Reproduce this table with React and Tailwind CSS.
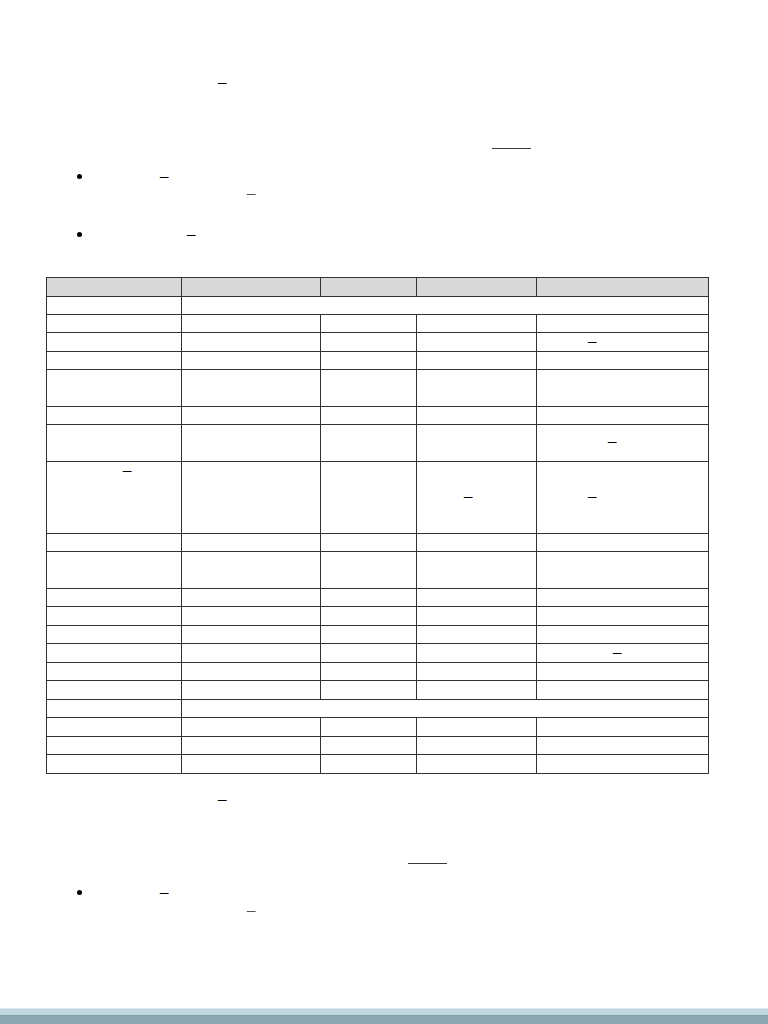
import React from 'react';

// cell in the grid table, borders on right/bottom only (outer frame gives left/top)
function Cell({ className = '', children }) {
  return <div className={`border-r border-b border-[#333333] ${className}`}>{children}</div>;
}

function Blank() {
  return <span className="block leading-[4px] text-[15px] text-black">_</span>;
}

export default function App() {
  return (
    <div className="w-full h-[1024px] bg-white flex flex-col font-['Liberation_Sans',Arial,sans-serif] text-black">
      {/* Top paragraph */}
      <div className="mt-[66px] h-[19px] leading-[19px] text-[15px] pl-[218px]">_</div>
      <div className="mt-[63px] ml-[492px] w-[39px] h-px bg-[#3a3a3a]"></div>

      <div className="mt-[11px] h-[19px] flex text-[15px] leading-[19px]">
        <span className="ml-[77px] mt-[14px] self-start w-[5px] h-[5px] rounded-full bg-black"></span>
        <span className="ml-[78px]">_</span>
      </div>
      <div className="-mt-[2px] h-[19px] leading-[19px] text-[15px] pl-[247px] text-[#555555]">_</div>

      <div className="mt-[22px] h-[19px] flex text-[15px] leading-[19px]">
        <span className="ml-[77px] mt-[14px] self-start w-[5px] h-[5px] rounded-full bg-black"></span>
        <span className="ml-[105px]">_</span>
      </div>

      {/* Table */}
      <div className="mt-[40px] ml-[46px] w-[663px] grid grid-cols-[135px_139px_96px_120px_172px] grid-rows-[19px_18px_18px_19px_18px_37px_18px_37px_72px_18px_37px_18px_19px_18px_19px_18px_19px_18px_19px_18px_19px] border-l border-t border-[#333333]">
        {/* header */}
        <Cell className="bg-[#d9d9d9]" />
        <Cell className="bg-[#d9d9d9]" />
        <Cell className="bg-[#d9d9d9]" />
        <Cell className="bg-[#d9d9d9]" />
        <Cell className="bg-[#d9d9d9]" />

        {/* row 2 merged */}
        <Cell />
        <Cell className="col-span-4" />

        {/* row 3 */}
        <Cell /><Cell /><Cell /><Cell /><Cell />

        {/* row 4 */}
        <Cell /><Cell /><Cell /><Cell />
        <Cell className="pl-[51px]"><Blank /></Cell>

        {/* row 5 */}
        <Cell /><Cell /><Cell /><Cell /><Cell />

        {/* row 6 */}
        <Cell /><Cell /><Cell /><Cell /><Cell />

        {/* row 7 */}
        <Cell /><Cell /><Cell /><Cell /><Cell />

        {/* row 8 */}
        <Cell /><Cell /><Cell /><Cell />
        <Cell className="pl-[71px] pt-[8px]"><Blank /></Cell>

        {/* row 9 */}
        <Cell className="pl-[76px]"><Blank /></Cell>
        <Cell />
        <Cell />
        <Cell className="pl-[47px] pt-[26px]"><Blank /></Cell>
        <Cell className="pl-[51px] pt-[26px]"><Blank /></Cell>

        {/* rows 10 - 14 */}
        <Cell /><Cell /><Cell /><Cell /><Cell />
        <Cell /><Cell /><Cell /><Cell /><Cell />
        <Cell /><Cell /><Cell /><Cell /><Cell />
        <Cell /><Cell /><Cell /><Cell /><Cell />
        <Cell /><Cell /><Cell /><Cell /><Cell />

        {/* row 15 */}
        <Cell /><Cell /><Cell /><Cell />
        <Cell className="pl-[76px]"><Blank /></Cell>

        {/* rows 16 - 17 */}
        <Cell /><Cell /><Cell /><Cell /><Cell />
        <Cell /><Cell /><Cell /><Cell /><Cell />

        {/* row 18 merged */}
        <Cell />
        <Cell className="col-span-4" />

        {/* rows 19 - 21 */}
        <Cell /><Cell /><Cell /><Cell /><Cell />
        <Cell /><Cell /><Cell /><Cell /><Cell />
        <Cell /><Cell /><Cell /><Cell /><Cell />
      </div>

      {/* Bottom paragraph */}
      <div className="mt-[9px] h-[19px] leading-[19px] text-[15px] pl-[218px]">_</div>
      <div className="mt-[61px] ml-[408px] w-[39px] h-px bg-[#3a3a3a]"></div>

      <div className="mt-[12px] h-[19px] flex text-[15px] leading-[19px]">
        <span className="ml-[77px] mt-[14px] self-start w-[5px] h-[5px] rounded-full bg-black"></span>
        <span className="ml-[78px]">_</span>
      </div>
      <div className="-mt-[1px] h-[19px] leading-[19px] text-[15px] pl-[247px] text-[#555555]">_</div>

      {/* Footer band */}
      <div className="mt-auto flex flex-col">
        <div className="h-px bg-[#dde9ee]"></div>
        <div className="h-[6px] bg-[#c2d8e0]"></div>
        <div className="h-px bg-[#7f9ca6]"></div>
        <div className="h-[8px] bg-[#8ca5af]"></div>
      </div>
    </div>
  );
}
